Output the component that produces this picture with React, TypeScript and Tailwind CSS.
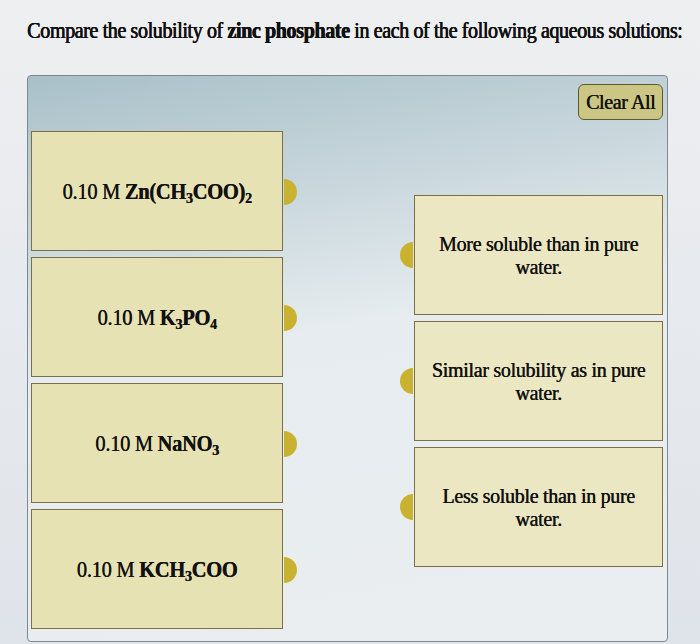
import React from "react";

const serif = { fontFamily: '"Liberation Serif", "Times New Roman", serif' };

function LeftBox({ children }: { children: React.ReactNode }) {
  return (
    <div className="relative h-[120px] w-[252px] border border-[#7d6f45] bg-[#e7e2b3] flex items-center justify-center">
      <div className="text-[20.5px] text-[#111] tracking-[-0.3px] scale-y-[1.1] [text-shadow:0.4px_0_0_#111]" style={serif}>{children}</div>
      <div className="absolute right-[-15px] top-[47px] h-[26px] w-[13px] rounded-r-full bg-[#c9b22f]" />
    </div>
  );
}

function RightBox({ l1 }: { l1: string }) {
  return (
    <div className="relative h-[120px] w-[249px] border border-[#7d6f45] bg-[#ebe7c2] flex items-center justify-center">
      <div className="text-center text-[20px] leading-[22px] text-[#111] tracking-[-0.3px] px-2 scale-y-[1.08] [text-shadow:0.4px_0_0_#111]" style={serif}>
        {l1}
        <br />
        water.
      </div>
      <div className="absolute left-[-15px] top-[46px] h-[26px] w-[13px] rounded-l-full bg-[#c9b22f]" />
    </div>
  );
}

export default function App() {
  return (
    <div className="w-[700px] h-[644px] bg-gradient-to-b from-[#eeeff1] to-[#dfe4ea] overflow-hidden" style={serif}>
      <div className="pl-[27px] pt-[13px] h-[75px]">
        <div className="origin-top-left scale-y-[1.15] text-[20.2px] text-[#111] tracking-[-0.45px] whitespace-nowrap [text-shadow:0.5px_0_0_#111,0_0_0.5px_#111]">
          Compare the solubility of <b>zinc phosphate</b> in each of the following aqueous solutions:
        </div>
      </div>
      <div className="ml-[27px] w-[641px] h-[567px] rounded-[4px] border border-[#7f8a8e] bg-[linear-gradient(170deg,#a9c0c8_0%,#c6d5db_22%,#e6ecef_45%,#eaeef1_100%)] flex flex-col">
        <div className="flex justify-end pt-[8px] pr-[4px]">
          <div className="h-[36px] w-[85px] rounded-[6px] border border-[#5c5a2e] bg-[#cbc683] flex items-center justify-center text-[20px] text-[#111] tracking-[-0.4px] [text-shadow:0.5px_0_0_#111]">
            Clear All
          </div>
        </div>
        <div className="flex justify-between pl-[3px] pr-[4px] mt-[11px]">
          <div className="flex flex-col gap-[6px]">
            <LeftBox>0.10 M <b>Zn(CH<sub className="text-[14px]">3</sub>COO)<sub className="text-[14px]">2</sub></b></LeftBox>
            <LeftBox>0.10 M <b>K<sub className="text-[14px]">3</sub>PO<sub className="text-[14px]">4</sub></b></LeftBox>
            <LeftBox>0.10 M <b>NaNO<sub className="text-[14px]">3</sub></b></LeftBox>
            <LeftBox>0.10 M <b>KCH<sub className="text-[14px]">3</sub>COO</b></LeftBox>
          </div>
          <div className="flex flex-col gap-[6px] pt-[64px]">
            <RightBox l1="More soluble than in pure" />
            <RightBox l1="Similar solubility as in pure" />
            <RightBox l1="Less soluble than in pure" />
          </div>
        </div>
      </div>
    </div>
  );
}
